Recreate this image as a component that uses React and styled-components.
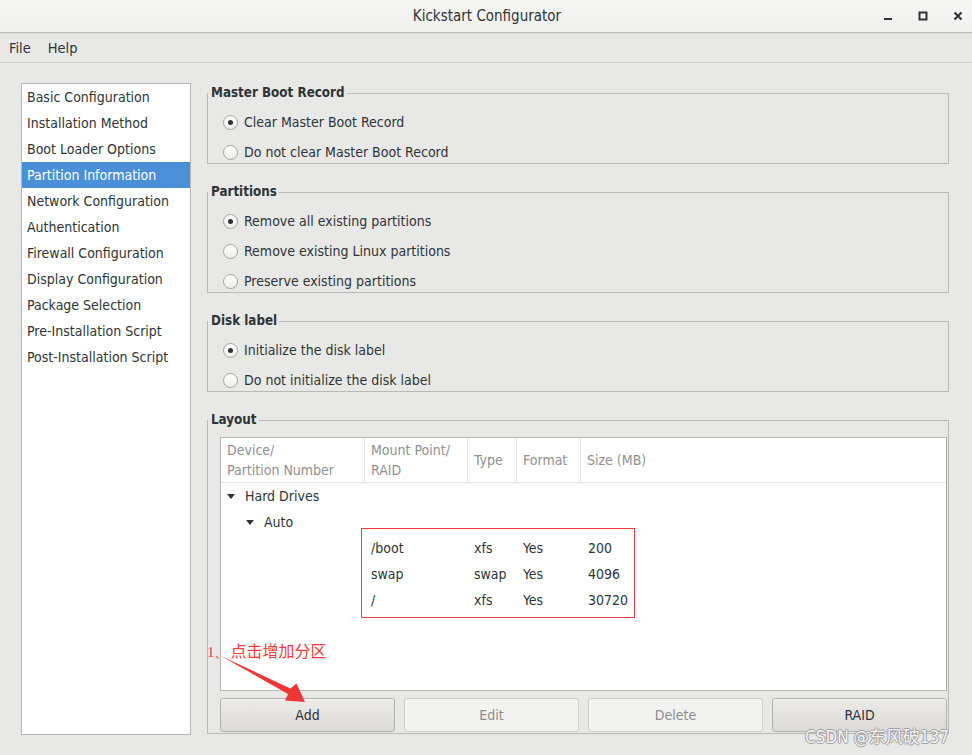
import styled, { createGlobalStyle } from "styled-components";

const GlobalStyle = createGlobalStyle`
    html, body {
        margin: 0;
        padding: 0;
        background: #e8e8e7;
    }
    body {
        font-family: "DejaVu Sans Condensed", "DejaVu Sans", "Liberation Sans Narrow", sans-serif;
        font-stretch: condensed;
        font-size: 14px;
        color: #2e3436;
    }
`

const sections = [
    "Basic Configuration",
    "Installation Method",
    "Boot Loader Options",
    "Partition Information",
    "Network Configuration",
    "Authentication",
    "Firewall Configuration",
    "Display Configuration",
    "Package Selection",
    "Pre-Installation Script",
    "Post-Installation Script",
];

const partitions = [
    { mount: "/boot", type: "xfs", format: "Yes", size: "200" },
    { mount: "swap", type: "swap", format: "Yes", size: "4096" },
    { mount: "/", type: "xfs", format: "Yes", size: "30720" },
];

function Radio({ checked, label }) {
    return (
        <RadioRow>
            <RadioCircle $checked={checked} />
            <span>{label}</span>
        </RadioRow>
    );
}

export default function App() {
    return (
        <Window>
            <GlobalStyle />
            <TitleBar>
                <Title>Kickstart Configurator</Title>
                <Controls>
                    <svg width="12" height="12" viewBox="0 0 12 12">
                        <rect x="2" y="8" width="8" height="2" fill="#2e3436" />
                    </svg>
                    <svg width="12" height="12" viewBox="0 0 12 12">
                        <rect x="2.5" y="2.5" width="7" height="7" fill="none" stroke="#2e3436" strokeWidth="2" />
                    </svg>
                    <svg width="12" height="12" viewBox="0 0 12 12">
                        <path d="M2.5 2.5 L9.5 9.5 M9.5 2.5 L2.5 9.5" stroke="#2e3436" strokeWidth="2" />
                    </svg>
                </Controls>
            </TitleBar>
            <MenuBar>
                <MenuItem>File</MenuItem>
                <MenuItem>Help</MenuItem>
            </MenuBar>
            <Body>
                <Sidebar>
                    {sections.map((s) => (
                        <SideItem key={s} $active={s === "Partition Information"}>{s}</SideItem>
                    ))}
                </Sidebar>
                <Content>
                    <Frame>
                        <Legend>Master Boot Record</Legend>
                        <Options>
                            <Radio checked label="Clear Master Boot Record" />
                            <Radio label="Do not clear Master Boot Record" />
                        </Options>
                    </Frame>
                    <Frame>
                        <Legend>Partitions</Legend>
                        <Options>
                            <Radio checked label="Remove all existing partitions" />
                            <Radio label="Remove existing Linux partitions" />
                            <Radio label="Preserve existing partitions" />
                        </Options>
                    </Frame>
                    <Frame>
                        <Legend>Disk label</Legend>
                        <Options>
                            <Radio checked label="Initialize the disk label" />
                            <Radio label="Do not initialize the disk label" />
                        </Options>
                    </Frame>
                    <LayoutFrame>
                        <Legend>Layout</Legend>
                        <LayoutInner>
                            <Tree>
                                <HeaderRow>
                                    <HeadCell>Device/<br />Partition Number</HeadCell>
                                    <HeadCell>Mount Point/<br />RAID</HeadCell>
                                    <HeadCell>Type</HeadCell>
                                    <HeadCell>Format</HeadCell>
                                    <HeadCell $last>Size (MB)</HeadCell>
                                </HeaderRow>
                                <TreeRow>
                                    <Expander $level={0}>
                                        <Arrow />Hard Drives
                                    </Expander>
                                </TreeRow>
                                <TreeRow>
                                    <Expander $level={1}>
                                        <Arrow />Auto
                                    </Expander>
                                </TreeRow>
                                {partitions.map((p) => (
                                    <TreeRow key={p.mount}>
                                        <Cell />
                                        <Cell>{p.mount}</Cell>
                                        <Cell>{p.type}</Cell>
                                        <Cell>{p.format}</Cell>
                                        <Cell $size>{p.size}</Cell>
                                    </TreeRow>
                                ))}
                            </Tree>
                            <Buttons>
                                <Button>Add</Button>
                                <Button disabled>Edit</Button>
                                <Button disabled>Delete</Button>
                                <Button>RAID</Button>
                            </Buttons>
                        </LayoutInner>
                    </LayoutFrame>
                </Content>
            </Body>

            <Overlay>
                <Highlight />
                <Note><NoteNum>1、</NoteNum>点击增加分区</Note>
                <svg width="972" height="755" viewBox="0 0 972 755">
                    <polygon
                        points="221,656 290.5,688.5 296.5,683.5 305,702 285,700.5 288,694"
                        fill="#f03535"
                    />
                </svg>
                <Watermark>CSDN @东风破137</Watermark>
            </Overlay>
        </Window>
    );
}

const Window = styled.div`
    position: relative;
    width: 972px;
    height: 755px;
    display: flex;
    flex-direction: column;
    overflow: hidden;
    background: #e8e8e7;
`
const TitleBar = styled.div`
    height: 32px;
    flex-shrink: 0;
    display: flex;
    align-items: center;
    justify-content: center;
    position: relative;
    background: linear-gradient(#f6f6f5, #efefee);
    border-bottom: 1px solid #bdbdbb;
    box-shadow: 0 1px 0 #dcdcda;
`
const Title = styled.div`
    font-size: 15px;
    color: #2e3436;
    margin-left: 2px;
`
const Controls = styled.div`
    position: absolute;
    right: 8px;
    top: 10px;
    display: flex;
    gap: 23px;
`
const MenuBar = styled.div`
    height: 29px;
    flex-shrink: 0;
    display: flex;
    align-items: center;
    gap: 17px;
    padding-left: 9px;
    border-bottom: 1px solid #d0d0ce;
    font-size: 14.5px;
`
const MenuItem = styled.span`
    color: #2e3436;
`
const Body = styled.div`
    flex: 1;
    display: flex;
    gap: 16px;
    padding: 20px 23px 20px 21px;
    min-height: 0;
    border-left: 1px solid #c9c9c7;
    margin-left: -1px;
`
const Sidebar = styled.div`
    width: 168px;
    flex-shrink: 0;
    background: #ffffff;
    border: 1px solid #b6b6b3;
`
const SideItem = styled.div`
    height: 26px;
    line-height: 26px;
    padding-left: 5px;
    white-space: nowrap;
    background: ${p => p.$active ? "#4a90d9" : "transparent"};
    color: ${p => p.$active ? "#ffffff" : "#2e3436"};
`
const Content = styled.div`
    flex: 1;
    display: flex;
    flex-direction: column;
    gap: 20px;
    padding-top: 2px;
    padding-bottom: 0;
    min-width: 0;
`
const Frame = styled.fieldset`
    margin: 0;
    padding: 0;
    border: 1px solid #b8b8b5;
    min-width: 0;
`
const Legend = styled.legend`
    padding: 0 2px 0 3px;
    margin-left: 0;
    font-weight: bold;
    font-size: 13.3px;
    line-height: 16px;
    color: #2e3436;
`
const Options = styled.div`
    display: flex;
    flex-direction: column;
    gap: 8px;
    padding: 10px 0 0 15px;
`
const RadioRow = styled.div`
    height: 22px;
    display: flex;
    align-items: center;
    gap: 6px;
    white-space: nowrap;
`
const RadioCircle = styled.span`
    width: 15px;
    height: 15px;
    border-radius: 50%;
    border: 1px solid #a1a19e;
    background: linear-gradient(#ffffff, #ededeb);
    box-sizing: border-box;
    display: flex;
    align-items: center;
    justify-content: center;
    &::after {
        content: "";
        display: ${p => p.$checked ? "block" : "none"};
        width: 5px;
        height: 5px;
        border-radius: 50%;
        background: #2e3436;
    }
`
const LayoutFrame = styled(Frame)`
    flex: 1;
    display: flex;
    flex-direction: column;
    min-height: 0;
    margin-bottom: 1px;
`
const LayoutInner = styled.div`
    flex: 1;
    display: flex;
    flex-direction: column;
    gap: 7px;
    padding: 9px 1px 1px 12px;
`
const Tree = styled.div`
    flex: 1;
    background: #ffffff;
    border: 1px solid #b6b6b3;
    border-right-color: #a8a8a5;
`
const columns = "144px 103px 49px 64px 1fr";
const HeaderRow = styled.div`
    display: grid;
    grid-template-columns: ${columns};
    height: 44px;
    border-bottom: 1px solid #e4e4e2;
`
const HeadCell = styled.div`
    display: flex;
    align-items: center;
    padding-left: 6px;
    line-height: 20px;
    color: #8f9091;
    white-space: nowrap;
    border-right: ${p => p.$last ? "none" : "1px solid #e4e4e2"};
`
const TreeRow = styled.div`
    display: grid;
    grid-template-columns: ${columns};
    height: 26px;
    align-items: center;
`
const Expander = styled.div`
    grid-column: 1 / -1;
    display: flex;
    align-items: center;
    gap: 6px;
    padding-left: ${p => 6 + p.$level * 19}px;
    white-space: nowrap;
`
const Arrow = styled.span`
    width: 0;
    height: 0;
    border-left: 4.5px solid transparent;
    border-right: 4.5px solid transparent;
    border-top: 5px solid #2e3436;
    margin-right: 4px;
`
const Cell = styled.div`
    padding-left: ${p => p.$size ? 7 : 6}px;
    white-space: nowrap;
`
const Buttons = styled.div`
    display: grid;
    grid-template-columns: repeat(4, 1fr);
    gap: 9px;
`
const Button = styled.button`
    height: 34px;
    font-family: inherit;
    font-stretch: condensed;
    font-size: 14px;
    border-radius: 3px;
    border: 1px solid ${p => p.disabled ? "#cdcdcb" : "#b0b0ad"};
    background: ${p => p.disabled ? "#f2f2f1" : "linear-gradient(#edebe9, #dcdad6)"};
    color: ${p => p.disabled ? "#8b8e8f" : "#2e3436"};
    box-shadow: ${p => p.disabled ? "none" : "inset 0 1px 0 #f8f8f7"};
    padding: 0;
`
const Overlay = styled.div`
    position: absolute;
    inset: 0;
    pointer-events: none;
    svg {
        position: absolute;
        left: 0;
        top: 0;
    }
`
const Highlight = styled.div`
    position: absolute;
    left: 361px;
    top: 528px;
    width: 274px;
    height: 90px;
    box-sizing: border-box;
    border: 1.5px solid #f03c3c;
`
const Note = styled.div`
    position: absolute;
    left: 207px;
    top: 640px;
    font-family: "Noto Sans CJK SC", sans-serif;
    font-weight: 400;
    font-size: 16px;
    line-height: 20px;
    color: #f23c3c;
    white-space: nowrap;
`
const NoteNum = styled.span`
    font-family: "Liberation Serif", serif;
    font-size: 15px;
    letter-spacing: -1px;
    margin-right: 3px;
`
const Watermark = styled.div`
    position: absolute;
    left: 805px;
    top: 725px;
    font-family: "DejaVu Sans", "Noto Sans CJK SC", sans-serif;
    font-size: 17px;
    line-height: 24px;
    color: rgba(255, 255, 255, 0.9);
    text-shadow: 1px 0 0 #a0a0a0, -1px 0 0 #a0a0a0, 0 1px 0 #a0a0a0, 0 -1px 0 #a0a0a0;
    white-space: nowrap;
`
